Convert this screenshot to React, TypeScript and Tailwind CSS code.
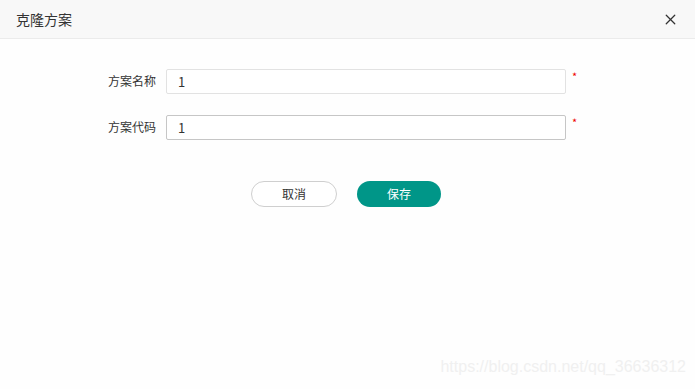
import { X } from "lucide-react";

const cjk = '"Microsoft YaHei", "Noto Sans CJK SC", "Liberation Sans", sans-serif';

function Field({ label, value, dark }: { label: string; value: string; dark?: boolean }) {
  return (
    <div className="flex items-start pl-[96px]">
      <label className="w-[60px] h-[24px] leading-[24px] text-right text-[12px] text-[#333]">{label}</label>
      <input
        defaultValue={value}
        className={
          dark
            ? "ml-[10px] w-[400px] h-[25px] border border-[#c6c6c6] rounded-[2px] pl-[11px] text-[13px] text-[#333] outline-none bg-white"
            : "ml-[10px] w-[400px] h-[25px] border border-[#e2e2e2] rounded-[2px] pl-[11px] text-[13px] text-[#333] outline-none bg-white"
        }
      />
      <span className="ml-[6px] mt-[1px] text-[11px] leading-[12px] text-[#e00]">*</span>
    </div>
  );
}

export default function App() {
  return (
    <div className="relative w-[695px] h-[389px] bg-[#fefefe] overflow-hidden" style={{ fontFamily: cjk }}>
      <div className="h-[39px] flex items-center justify-between pl-4 pr-[16px] bg-[#f8f8f8] border-b border-[#ebebeb]">
        <span className="text-[14px] text-[#333]">克隆方案</span>
        <X size={17} strokeWidth={1.8} className="text-[#333]" />
      </div>

      <div className="pt-[30px] flex flex-col gap-[21px]">
        <Field label="方案名称" value="1" />
        <Field label="方案代码" value="1" dark />
      </div>

      <div className="flex gap-[20px] pl-[251px] mt-[41px]">
        <button className="w-[86px] h-[26px] rounded-full border border-[#cfcfcf] bg-white text-[12px] text-[#333]">取消</button>
        <button className="w-[84px] h-[26px] rounded-full bg-[#009688] text-[12px] text-white">保存</button>
      </div>

      <div
        className="absolute right-[9px] bottom-[10px] text-[16px] text-[#f0f0f0]"
        style={{ fontFamily: '"Liberation Sans", Arial, sans-serif' }}
      >
        https://blog.csdn.net/qq_36636312
      </div>
    </div>
  );
}
